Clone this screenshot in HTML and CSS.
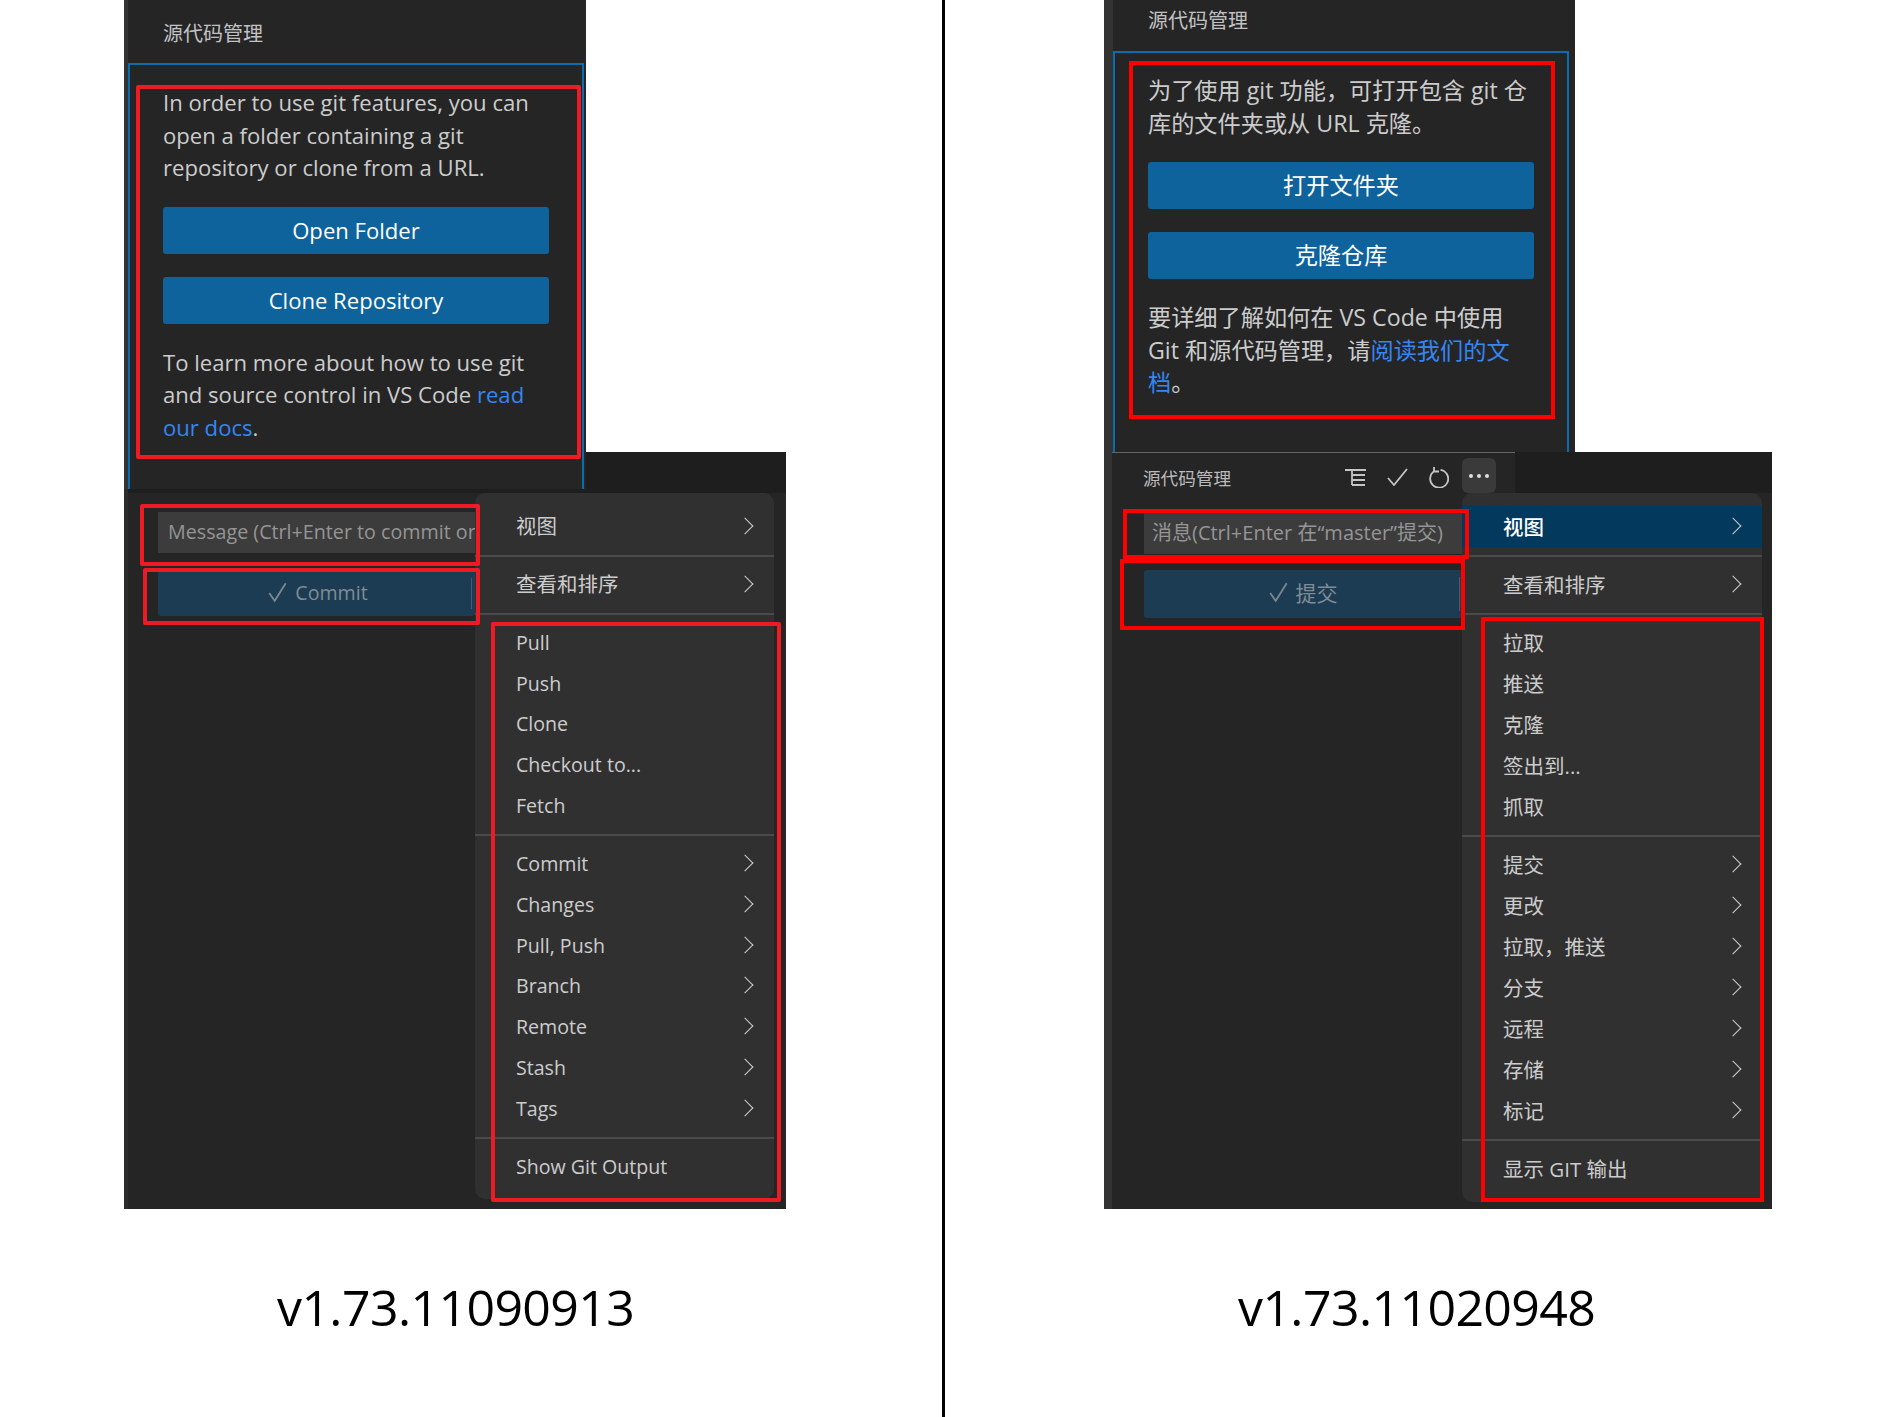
FILE: index.html
```html
<!DOCTYPE html>
<html lang="zh">

<head>
    <meta charset="UTF-8">
    <title>v1.73 source control</title>
    <link rel="stylesheet" href="styles.css">
</head>

<body>
    <div class="compare">
        <!-- older build, english strings -->
        <section class="build build-a">
            <div class="welcome">
                <div class="scm-title">源代码管理</div>
                <div class="welcome-box">
                    <p>In order to use git features, you can open a folder containing a git repository or clone from a URL.</p>
                    <button class="btn">Open Folder</button>
                    <button class="btn">Clone Repository</button>
                    <p>To learn more about how to use git and source control in VS Code <a href="#">read our docs</a>.</p>
                </div>
            </div>
            <div class="scm">
                <div class="scm-input"><span>Message (Ctrl+Enter to commit or</span></div>
                <div class="scm-commit">
                    <svg class="check" viewBox="0 0 20 20"><path d="M2 11l5 7L17 2"/></svg>
                    <span>Commit</span><i class="commit-sep"></i>
                </div>
                <ul class="menu">
                    <li class="item has-sub zh">视图</li>
                    <li class="sep"></li>
                    <li class="item has-sub zh">查看和排序</li>
                    <li class="sep"></li>
                    <li class="item">Pull</li>
                    <li class="item">Push</li>
                    <li class="item">Clone</li>
                    <li class="item">Checkout to...</li>
                    <li class="item">Fetch</li>
                    <li class="sep"></li>
                    <li class="item has-sub">Commit</li>
                    <li class="item has-sub">Changes</li>
                    <li class="item has-sub">Pull, Push</li>
                    <li class="item has-sub">Branch</li>
                    <li class="item has-sub">Remote</li>
                    <li class="item has-sub">Stash</li>
                    <li class="item has-sub">Tags</li>
                    <li class="sep"></li>
                    <li class="item">Show Git Output</li>
                </ul>
            </div>
            <div class="version">v1.73.11090913</div>
            <div class="mark mark-a1"></div>
            <div class="mark mark-a2"></div>
            <div class="mark mark-a3"></div>
            <div class="mark mark-a4"></div>
        </section>

        <!-- newer build, chinese strings -->
        <section class="build build-b">
            <div class="welcome">
                <div class="scm-title">源代码管理</div>
                <div class="welcome-box">
                    <p>为了使用 git 功能，可打开包含 git 仓库的文件夹或从 URL 克隆。</p>
                    <button class="btn">打开文件夹</button>
                    <button class="btn">克隆仓库</button>
                    <p>要详细了解如何在 VS Code 中使用 Git 和源代码管理，请<a href="#">阅读我们的文档</a>。</p>
                </div>
            </div>
            <div class="scm">
                <div class="scm-head">
                    <span class="scm-head-title">源代码管理</span>
                    <svg class="tool tool-tree" viewBox="0 0 21 18"><path d="M0 2h21M7 2v15M7 7h13M7 12h13M7 17h13"/></svg>
                    <svg class="tool tool-check" viewBox="0 0 21 18"><path d="M1 10l6 7L20 1"/></svg>
                    <svg class="tool tool-refresh" viewBox="0 0 21 21"><path d="M6.500 4a9 9 0 1 0 6-1.200M6 0v4.500h5"/></svg>
                    <span class="tool-more">
                        <svg viewBox="0 0 34 35"><circle cx="9" cy="18" r="2"/><circle cx="17" cy="18" r="2"/><circle cx="25" cy="18" r="2"/></svg>
                    </span>
                </div>
                <div class="scm-input"><span>消息(Ctrl+Enter 在“master”提交)</span></div>
                <div class="scm-commit">
                    <svg class="check" viewBox="0 0 20 20"><path d="M2 11l5 7L17 2"/></svg>
                    <span>提交</span><i class="commit-sep"></i>
                </div>
                <ul class="menu">
                    <li class="item has-sub active">视图</li>
                    <li class="sep"></li>
                    <li class="item has-sub">查看和排序</li>
                    <li class="sep"></li>
                    <li class="item">拉取</li>
                    <li class="item">推送</li>
                    <li class="item">克隆</li>
                    <li class="item">签出到...</li>
                    <li class="item">抓取</li>
                    <li class="sep"></li>
                    <li class="item has-sub">提交</li>
                    <li class="item has-sub">更改</li>
                    <li class="item has-sub">拉取，推送</li>
                    <li class="item has-sub">分支</li>
                    <li class="item has-sub">远程</li>
                    <li class="item has-sub">存储</li>
                    <li class="item has-sub">标记</li>
                    <li class="sep"></li>
                    <li class="item">显示 GIT 输出</li>
                </ul>
            </div>
            <div class="version">v1.73.11020948</div>
            <div class="mark mark-b1"></div>
            <div class="mark mark-b2"></div>
            <div class="mark mark-b3"></div>
            <div class="mark mark-b4"></div>
        </section>
    </div>
</body>

</html>
```

FILE: styles.css
```css
* { box-sizing: border-box; }
html, body { margin: 0; padding: 0; background: #fff; }
body {
    width: 1890px;
    height: 1417px;
    overflow: hidden;
    font-family: "Open Sans", "Noto Sans CJK SC", sans-serif;
}
.compare { display: flex; height: 1417px; }
.build { position: relative; height: 100%; }
.build-a { width: 945px; padding-left: 124px; border-right: 3px solid #000; }
.build-b { width: 945px; padding-left: 159px; }

/* welcome view */
.welcome {
    position: relative;
    z-index: 1;
    background: #252526;
    color: #ccc;
    font-size: 22.1px;
    line-height: 32.5px;
}
.build-a .welcome { width: 462px; height: 489px; margin-bottom: -37px; border-left: 4px solid #333; padding-top: 63px; }
.build-b .welcome { width: 471px; height: 452px; border-left: 9px solid #333; padding-top: 51px; font-size: 23.2px; }
.scm-title { position: absolute; font-size: 20px; line-height: 26px; color: #c2c2c2; }
.build-a .scm-title { left: 35px; top: 21px; }
.build-b .scm-title { left: 35px; top: 8px; }
.welcome-box { border: 2px solid #0b6cae; border-bottom: none; height: 100%; width: 456px; padding: 0 33px; }
.build-a .welcome-box { padding-top: 21px; }
.build-b .welcome-box { padding-top: 21px; }
.welcome p { margin: 0; }
.welcome a { color: #3585f2; text-decoration: none; }
.btn {
    display: block;
    width: 386px;
    height: 47px;
    margin-top: 23px;
    border: none;
    border-radius: 3px;
    background: #0e639c;
    color: #fff;
    font: inherit;
}
.btn + .btn { margin-top: 23px; }
.btn + p { margin-top: 22px; }

/* scm view */
.scm {
    position: relative;
    height: 757px;
    background: linear-gradient(#1e1e1e 41px, #252526 41px);
    color: #ccc;
    font-size: 20px;
}
.build-a .scm { width: 662px; border-left: 4px solid #2c2c2c; padding: 60px 0 0 30px; }
.build-b .scm { width: 668px; border-left: 8px solid #333; padding-left: 32px; }
.scm-head {
    display: flex;
    align-items: center;
    width: 403px;
    height: 41px;
    margin: 0 0 20px -32px;
    padding: 8px 0 0 31px;
    background: #252526;
    border-top: 1px solid #666;
    position: relative;
}
.scm-head-title { font-size: 17.6px; color: #bbb; width: 202px; }
.tool { fill: none; stroke: #c5c5c5; stroke-width: 1.8; }
.tool-tree { width: 21px; height: 18px; margin-right: 21px; }
.tool-check { width: 21px; height: 18px; margin-right: 20px; }
.tool-refresh { width: 21px; height: 21px; margin-right: 13px; }
.tool-more {
    align-self: flex-start;
    width: 34px;
    height: 35px;
    margin-top: -3px;
    border-radius: 6px;
    background: #3a3a3b;
    z-index: 4;
}
.tool-more svg { display: block; width: 34px; height: 35px; fill: #e0e0e0; }
.scm-input {
    height: 41px;
    width: 317px;
    padding-left: 10px;
    background: #3c3c3c;
    color: #959595;
    line-height: 40px;
    white-space: nowrap;
    overflow: hidden;
    font-size: 19.7px;
}
.build-b .scm-input { width: 318px; padding-left: 8px; font-size: 20px; }
.scm-commit {
    position: relative;
    display: flex;
    align-items: center;
    justify-content: center;
    gap: 6px;
    width: 317px;
    height: 45px;
    margin-top: 18px;
    padding: 0 0 3px 2px;
    border-radius: 3px;
    background: #1c3c54;
    color: #808b93;
    font-size: 19.6px;
}
.build-b .scm-commit { width: 319px; height: 48px; margin-top: 16px; padding: 0 2px 5px 0; font-size: 21px; }
.commit-sep { position: absolute; right: 3px; top: 7px; bottom: 7px; width: 1px; background: #455c6d; }
.check { width: 22px; height: 22px; fill: none; stroke: #7b8891; stroke-width: 1.6; }

/* context menu */
.menu {
    position: absolute;
    top: 41px;
    list-style: none;
    margin: 0;
    padding: 13px 0 12px;
    border-radius: 10px;
    background: #303031;
    color: #ccc;
    font-size: 20.5px;
    z-index: 3;
}
.build-a .menu { left: 347px; width: 299px; }
.build-b .menu { left: 350px; width: 300px; padding-bottom: 13px; }
.item {
    position: relative;
    height: 41px;
    line-height: 41px;
    padding-left: 41px;
}
.build-a .item { height: 40.85px; font-size: 19.6px; }
.build-a .zh { font-size: 20.5px; }
.build-b .item { line-height: 43px; }
.has-sub::after {
    content: "";
    position: absolute;
    right: 23px;
    top: 14px;
    width: 11px;
    height: 11px;
    border-top: 1.7px solid #ccc;
    border-right: 1.7px solid #ccc;
    transform: rotate(45deg);
}
.active { background: #04395e; color: #fff; font-weight: 500; }
.sep { height: 2px; margin: 8px 0 7px; background: #4a4a4b; }

.version {
    position: absolute;
    top: 1269px;
    font-size: 50px;
    line-height: 76px;
    color: #000;
    letter-spacing: -0.6px;
}
.build-a .version { left: 277px; }
.build-b .version { left: 293px; }

/* red annotation boxes */
.mark { position: absolute; border: 4px solid #ed1c24; border-radius: 2px; z-index: 5; pointer-events: none; }
.mark-a1 { left: 136px; top: 85px; width: 445px; height: 374px; }
.mark-a2 { left: 140px; top: 504px; width: 340px; height: 62px; }
.mark-a3 { left: 143px; top: 568px; width: 337px; height: 57px; }
.mark-a4 { left: 491px; top: 622px; width: 290px; height: 580px; }
.build-b .mark { border-color: #f00; border-radius: 0; }
.mark-b1 { left: 184px; top: 61px; width: 426px; height: 358px; }
.mark-b2 { left: 178px; top: 509px; width: 346px; height: 50px; }
.mark-b3 { left: 175px; top: 559px; width: 345px; height: 71px; }
.mark-b4 { left: 536px; top: 617px; width: 283px; height: 585px; }
```
